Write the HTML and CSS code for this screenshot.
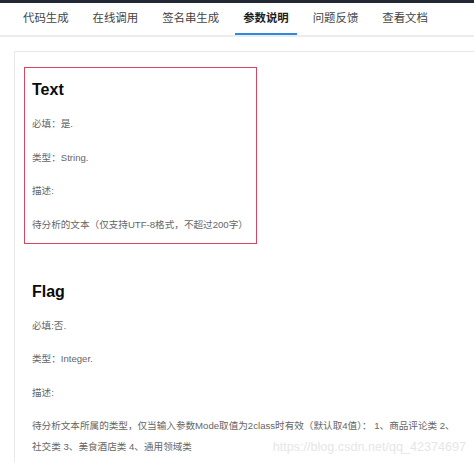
FILE: index.html
```html
<!DOCTYPE html>
<html lang="zh-CN">
<head>
<meta charset="utf-8">
<title>参数说明</title>
<link rel="stylesheet" href="styles.css">
</head>
<body>
<div class="topbar"></div>
<nav class="tabs">
  <a class="tab">代码生成</a>
  <a class="tab">在线调用</a>
  <a class="tab">签名串生成</a>
  <a class="tab active">参数说明</a>
  <a class="tab">问题反馈</a>
  <a class="tab">查看文档</a>
</nav>
<main class="content">
  <div class="panel">
    <section class="param highlight">
      <h3 class="param-name">Text</h3>
      <p class="param-line">必填：是.</p>
      <p class="param-line">类型：String.</p>
      <p class="param-line">描述:</p>
      <p class="param-line">待分析的文本（仅支持UTF-8格式，不超过200字）</p>
    </section>
    <section class="param wide">
      <h3 class="param-name">Flag</h3>
      <p class="param-line">必填:否.</p>
      <p class="param-line">类型：Integer.</p>
      <p class="param-line">描述:</p>
      <p class="param-line">待分析文本所属的类型，仅当输入参数Mode取值为2class时有效（默认取4值）： 1、商品评论类 2、社交类 3、美食酒店类 4、通用领域类</p>
    </section>
  </div>
</main>
<div class="watermark">https://blog.csdn.net/qq_42374697</div>
</body>
</html>
```
FILE: styles.css
```css
html, body {
  margin: 0;
  padding: 0;
  background: #ffffff;
  overflow: hidden;
}
body {
  font-family: "Liberation Sans", "Noto Sans CJK SC", sans-serif;
  height: 462px;
  position: relative;
}
.topbar {
  height: 3px;
  background: #232733;
}
.tabs {
  display: flex;
  gap: 8px;
  height: 32px;
  padding-left: 15px;
  border-bottom: 2px solid #ececec;
  box-sizing: content-box;
}
.tab {
  display: block;
  padding: 0 8px;
  height: 32px;
  line-height: 31px;
  font-size: 11.4px;
  color: #444;
  box-sizing: border-box;
}
.tab.active {
  color: #1e1e1e;
  font-weight: bold;
  border-bottom: 2px solid #2f88e3;
}
.content {
  padding: 14px 0 0 14px;
}
.panel {
  border-top: 1px solid #e8e8e8;
  border-left: 1px solid #e8e8e8;
  padding: 15px 0 0 9px;
  height: 400px;
}
.param {
  border: 1px solid transparent;
  padding: 12px 8px 8px 7px;
}
.param.highlight {
  width: 216px;
  border: 1px solid #d9455e;
  margin-bottom: 25px;
}
.param.wide {
  width: 428px;
}
.param-name {
  margin: 0 0 13px;
  font-size: 16px;
  line-height: 20px;
  font-weight: bold;
  color: #0a0a0a;
}
.param-line {
  margin: 0 0 12.5px;
  font-size: 9.6px;
  line-height: 21px;
  color: #666;
}
.param-line:last-child {
  margin-bottom: 0;
}
.watermark {
  position: absolute;
  right: 8px;
  bottom: 8px;
  font-size: 12.6px;
  color: #e6e6e6;
}
```
